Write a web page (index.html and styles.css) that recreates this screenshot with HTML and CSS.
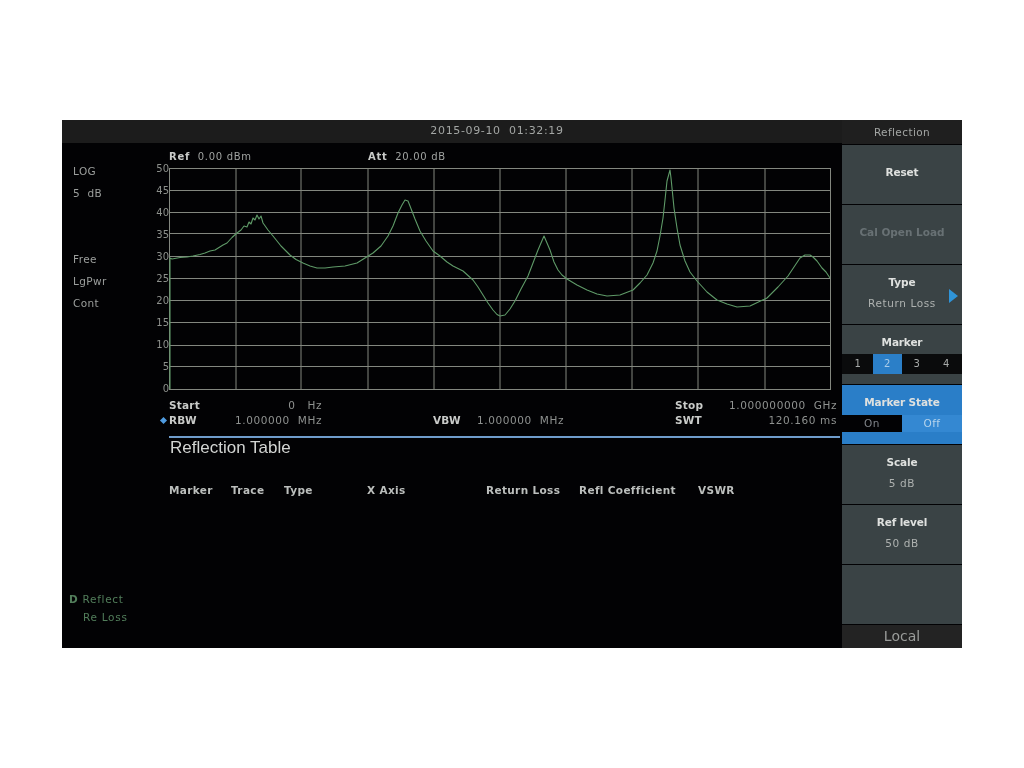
FILE: index.html
```html
<!DOCTYPE html>
<html lang="en">
<head>
<meta charset="utf-8">
<title>Reflection</title>
<link rel="stylesheet" href="styles.css">
</head>
<body>
<div class="device">
  <main class="main">
    <header class="topbar">2015-09-10&nbsp;&nbsp;01:32:19</header>
    <div class="work">
      <aside class="side">
        <div class="side-top">
          <div class="side-line">LOG</div>
          <div class="side-line">5&nbsp;&nbsp;dB</div>
          <div class="side-line side-gap">Free</div>
          <div class="side-line">LgPwr</div>
          <div class="side-line">Cont</div>
        </div>
        <div class="side-trace">
          <div><b class="trace-id">D</b> Reflect</div>
          <div class="trace-sub">Re Loss</div>
        </div>
      </aside>
      <section class="content">
        <div class="refrow">
          <span class="ref"><b>Ref</b>&nbsp;&nbsp;0.00 dBm</span>
          <span class="att"><b>Att</b>&nbsp;&nbsp;20.00 dB</span>
        </div>
        <svg class="chart" viewBox="155 164 680 232" width="680" height="232" xmlns="http://www.w3.org/2000/svg">
          <g class="grid">
            <rect x="169.5" y="168.5" width="661" height="221"/>
            <path d="M236 168V389M301 168V389M368 168V389M434 168V389M500 168V389M566 168V389M632 168V389M698 168V389M765 168V389"/>
            <path d="M169 190.5H830M169 212.5H830M169 233.5H830M169 256.5H830M169 278.5H830M169 300.5H830M169 322.5H830M169 345.5H830M169 366.5H830"/>
          </g>
          <g class="axis">
            <text x="169" y="172">50</text><text x="169" y="194">45</text><text x="169" y="216">40</text><text x="169" y="238">35</text><text x="169" y="260">30</text><text x="169" y="282">25</text><text x="169" y="304">20</text><text x="169" y="326">15</text><text x="169" y="348">10</text><text x="169" y="370">5</text><text x="169" y="392">0</text>
          </g>
          <polyline class="trace" points="170,389 170,258 172,259 180,257.5 187,257 193,256 200,254.5 205,253 210,251 215,250 219,247.5 223,245 227,243 232,237.5 237,233 241,230 244,226 247,227 249,222 251,224 253,218 255,220 257,215 259,219 261,216 263,223 268,230 273,236 281,246 290,255 296,259.5 303,263 310,266 317,268 325,268 333,267 345,266 357,263 365,258 373,253 381,246 388,236 393,226 398,213 402,205 405,200 408,201 410,206 415,219 420,231 426,241 433,251 440,256 447,262 453,266 463,271 473,280 478,287 483,295 488,303 493,310 497,314.5 500,316 505,315 510,309 515,301 521,289 528,276 533,263 538,250 544,236 550,250 554,262 558,270 562,275 567,279 577,285 587,290 597,294 607,296 620,295 633,290 640,283 647,275 653,263 657,251 660,236 663,218 665,200 667,181 670,170 671,178 672,188 674,208 677,228 680,245 685,261 690,272 697,281 707,292 717,300 727,304 737,307 750,306 767,298 778,287 788,276 794,267 800,258 805,255 810,255 813,257 817,261 822,268 826,272 830,278"/>
        </svg>
        <div class="info">
          <div class="cell c1"><b>Start</b><span>0&nbsp;&nbsp;&nbsp;Hz</span></div>
          <div class="cell c2"></div>
          <div class="cell c3"><b>Stop</b><span>1.000000000&nbsp;&nbsp;GHz</span></div>
          <div class="cell c1 rbw"><b>RBW</b><span>1.000000&nbsp;&nbsp;MHz</span></div>
          <div class="cell c2"><b>VBW</b><span>1.000000&nbsp;&nbsp;MHz</span></div>
          <div class="cell c3"><b>SWT</b><span>120.160 ms</span></div>
        </div>
        <div class="rule"></div>
        <h1 class="table-title">Reflection Table</h1>
        <div class="thead">
          <span>Marker</span><span>Trace</span><span>Type</span><span>X Axis</span><span>Return Loss</span><span>Refl Coefficient</span><span>VSWR</span>
        </div>
      </section>
    </div>
  </main>
  <nav class="keys">
    <div class="keys-head">Reflection</div>
    <div class="key single"><div class="key-title">Reset</div></div>
    <div class="key single off"><div class="key-title">Cal Open Load</div></div>
    <div class="key"><div class="key-title">Type</div><div class="key-sub">Return Loss</div><i class="arrow"></i></div>
    <div class="key"><div class="key-title">Marker</div>
      <div class="seg"><span>1</span><span class="seg-on">2</span><span>3</span><span>4</span></div>
    </div>
    <div class="key active"><div class="key-title">Marker State</div>
      <div class="toggle"><span class="t-on">On</span><span class="t-off">Off</span></div>
    </div>
    <div class="key"><div class="key-title">Scale</div><div class="key-sub">5 dB</div></div>
    <div class="key"><div class="key-title">Ref level</div><div class="key-sub">50 dB</div></div>
    <div class="key"></div>
    <div class="keys-foot">Local</div>
  </nav>
</div>
</body>
</html>
```
FILE: styles.css
```css
* { box-sizing: border-box; }
html, body { margin: 0; padding: 0; background: #fff; }
body { width: 1024px; height: 768px; overflow: hidden; font-family: "DejaVu Sans", sans-serif; font-size: 10px; color: #a9adab; }
.device { margin: 120px 0 0 62px; width: 900px; height: 528px; display: flex; background: #020204; filter: blur(0.5px); }
.main { width: 780px; display: flex; flex-direction: column; }
.topbar { height: 23px; background: #1c1c1c; padding-left: 90px; text-align: center; line-height: 21px; font-size: 11px; color: #a3a6a4; letter-spacing: 0.65px; }
.work { flex: 1; display: flex; }
.side { width: 93px; padding: 17px 0 0 11px; display: flex; flex-direction: column; justify-content: space-between; color: #9c9f9d; font-size: 10.5px; letter-spacing: 0.4px; }
.side-line { height: 22px; line-height: 22px; }
.side-gap { margin-top: 44px; }
.side-trace { color: #527e5b; padding: 0 0 22px 0; line-height: 18px; margin-left: -4px; font-size: 10.5px; letter-spacing: 0.7px; }
.trace-id { font-weight: bold; }
.trace-sub { padding-left: 14px; }
.content { width: 687px; }
.refrow { height: 21px; padding: 7px 0 0 14px; line-height: 14px; display: flex; color: #a0a3a1; letter-spacing: 0.7px; }
.refrow b { color: #c9cbc9; }
.ref { width: 199px; }
.chart { display: block; }
.grid { fill: none; stroke: #83877f; stroke-width: 1; }
.axis { fill: #8d908c; font-size: 10px; text-anchor: end; font-family: "DejaVu Sans", sans-serif; }
.trace { fill: none; stroke: #5f9a68; stroke-width: 1.1; stroke-linejoin: round; }
.info { margin: 2px 0 0 14px; display: grid; grid-template-columns: 153px 131px 162px; column-gap: 111px; grid-auto-rows: 15px; line-height: 15px; }
.cell { display: flex; justify-content: space-between; position: relative; color: #8f9290; font-size: 10.5px; letter-spacing: 0.6px; }
.cell b { color: #c9cbc9; font-size: 10.5px; letter-spacing: 0.2px; }
.rbw::before { content: ""; position: absolute; left: -8px; top: 5px; width: 5px; height: 5px; background: #4f9be0; transform: rotate(45deg); }
.rule { margin: 8px 2px 0 14px; height: 2px; background: #6f9ccb; }
.table-title { margin: 0 0 0 15px; font: normal 17px/20px "Liberation Sans", sans-serif; color: #d3d5d3; }
.thead { margin: 22px 0 0 14px; display: grid; grid-template-columns: 62px 53px 83px 119px 93px 119px auto; line-height: 20px; font-weight: bold; color: #bcbfbd; font-size: 10.5px; letter-spacing: 0.35px; }
.keys { width: 120px; display: flex; flex-direction: column; gap: 1px; }
.keys-head { height: 24px; background: #1f1f1f; text-align: center; line-height: 25px; font-size: 10.5px; color: #a3a6a4; letter-spacing: 0.4px; }
.key { height: 59px; background: #3a4345; padding-top: 7px; text-align: center; position: relative; }
.single { padding-top: 17px; }
.key-title { line-height: 20px; font-weight: bold; font-size: 10.5px; letter-spacing: -0.15px; color: #dfe1df; }
.key-sub { line-height: 22px; font-size: 10.5px; color: #aeb2b0; letter-spacing: 0.6px; }
.off .key-title { color: #687174; letter-spacing: 0; }
.arrow { position: absolute; right: 4px; top: 24px; width: 0; height: 0; border-left: 9px solid #2f94d8; border-top: 7px solid transparent; border-bottom: 7px solid transparent; }
.seg { display: flex; margin-top: 2px; height: 20px; background: #0a0b0c; padding: 0 1px; line-height: 20px; color: #a8abaa; }
.seg span { flex: 1; }
.seg .seg-on { background: #2b7fc8; color: #a9cce9; }
.active { background: #2a7ec8; }
.toggle { display: flex; margin-top: 3px; height: 17px; line-height: 17px; }
.toggle span { flex: 1; font-size: 10.5px; letter-spacing: 0.5px; }
.t-on { background: #020204; color: #80848a; }
.t-off { background: #3488d2; color: #b6d4ec; }
.keys-foot { flex: 1; background: #232323; text-align: center; font: 14px/22px "DejaVu Sans", sans-serif; color: #9a9c9a; }
```
